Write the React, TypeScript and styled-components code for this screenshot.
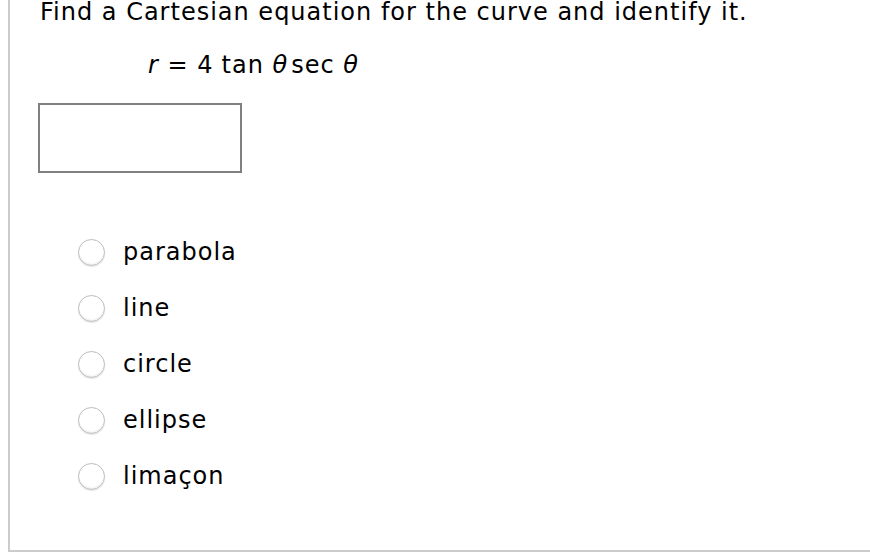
import React from "react";
import styled, { createGlobalStyle } from "styled-components";

const Global = createGlobalStyle`
  html, body { margin: 0; padding: 0; background: #fff; overflow: hidden; }
  body { padding: 0 0 0 8px; font-family: "DejaVu Sans", Verdana, sans-serif; color: #000; }
`;

const Panel = styled.div`
  box-sizing: border-box;
  width: 900px;
  height: 552px;
  border-left: 2px solid #cccccc;
  border-bottom: 2px solid #cccccc;
  padding: 0 0 0 28px;
  display: flex;
  flex-direction: column;
`;

const Question = styled.div`
  font-size: 24px;
  line-height: 26px;
  margin-top: -1px;
  padding-left: 2px;
  letter-spacing: 1px;
  white-space: nowrap;
`;

const Equation = styled.div`
  margin-top: 26px;
  padding-left: 110px;
  font-size: 24px;
  line-height: 28px;
  letter-spacing: 1px;
  white-space: nowrap;
`;

const Var = styled.i`
  font-style: italic;
`;

const Gap = styled.span<{ $w: number }>`
  display: inline-block;
  width: ${(p) => p.$w}px;
`;

const AnswerBox = styled.input`
  box-sizing: border-box;
  margin-top: 24px;
  width: 204px;
  height: 70px;
  border: 2px solid #808080;
  background: #fff;
  outline: none;
  font-size: 20px;
`;

const Options = styled.div`
  display: flex;
  flex-direction: column;
  margin-top: 65px;
  padding-left: 40px;
  gap: 28px;
`;

const Option = styled.label`
  display: flex;
  align-items: center;
  gap: 18px;
  height: 28px;
  font-size: 24px;
  letter-spacing: 1px;
`;

const Radio = styled.span`
  box-sizing: border-box;
  width: 27px;
  height: 27px;
  border-radius: 50%;
  border: 1px solid #bcbcbc;
  background: radial-gradient(circle at 50% 35%, #ffffff 60%, #f2f2f2 100%);
  box-shadow: inset 0 -1px 1px rgba(0, 0, 0, 0.06), 0 1px 1px rgba(0, 0, 0, 0.1);
  flex: none;
`;

const options = ["parabola", "line", "circle", "ellipse", "limaçon"];

export default function App() {
  return (
    <>
      <Global />
      <Panel>
        <Question>Find a Cartesian equation for the curve and identify it.</Question>
        <Equation>
          <Var>r</Var> = 4<Gap $w={8} />tan <Var>θ</Var><Gap $w={3} />sec <Var>θ</Var>
        </Equation>
        <AnswerBox type="text" />
        <Options>
          {options.map((o) => (
            <Option key={o}>
              <Radio />
              {o}
            </Option>
          ))}
        </Options>
      </Panel>
    </>
  );
}
